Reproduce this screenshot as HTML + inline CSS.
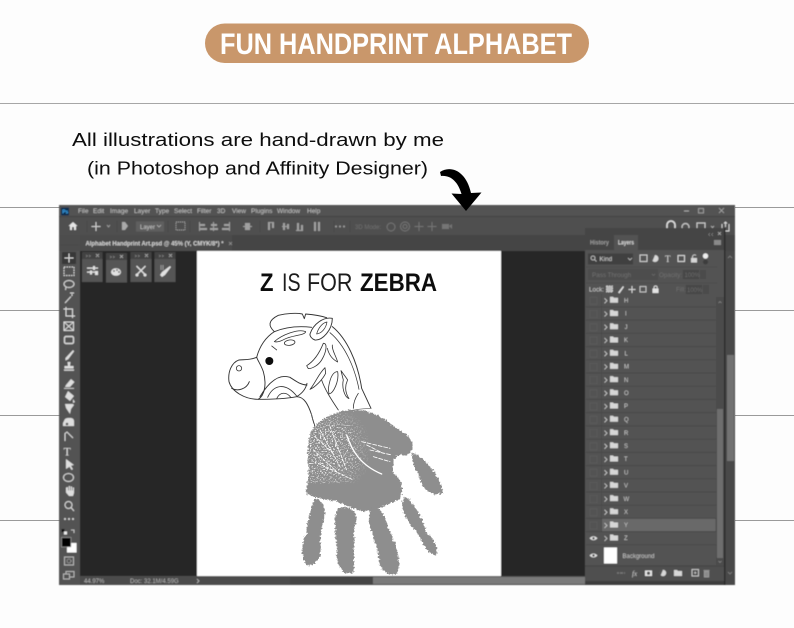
<!DOCTYPE html>
<html><head><meta charset="utf-8"><style>
html,body{margin:0;padding:0;background:#fdfdfd;width:794px;height:628px;overflow:hidden}
svg{display:block}
text{font-family:"Liberation Sans",sans-serif}
</style></head><body>
<svg width="794" height="628" viewBox="0 0 794 628" xmlns="http://www.w3.org/2000/svg">
<defs>
<filter id="b3" x="-5%" y="-5%" width="110%" height="110%"><feGaussianBlur stdDeviation=".35"/></filter>
<filter id="b5" x="-2%" y="-2%" width="104%" height="104%"><feGaussianBlur stdDeviation=".42"/></filter>
<filter id="rough" x="-10%" y="-10%" width="120%" height="120%" color-interpolation-filters="sRGB"><feTurbulence type="fractalNoise" baseFrequency=".16" numOctaves="3" seed="4"/><feDisplacementMap in="SourceGraphic" scale="14" xChannelSelector="R" yChannelSelector="G"/><feGaussianBlur stdDeviation=".8"/></filter>
<filter id="speck" x="0" y="0" width="100%" height="100%" color-interpolation-filters="sRGB"><feTurbulence type="fractalNoise" baseFrequency=".2 .28" numOctaves="2" seed="9"/><feColorMatrix values="0 0 0 0 1 0 0 0 0 1 0 0 0 0 1 9 0 0 0 -5"/><feComposite operator="in" in2="SourceGraphic"/><feGaussianBlur stdDeviation=".7"/></filter>
<radialGradient id="fade" gradientUnits="userSpaceOnUse" cx="95" cy="150" r="150"><stop offset="0" stop-color="#fff" stop-opacity="1"/><stop offset=".55" stop-color="#fff" stop-opacity=".8"/><stop offset="1" stop-color="#fff" stop-opacity="0"/></radialGradient>
<g id="fo"><path d="M0 1h3l1 1h4v5H0z" fill="#d6d6d6"/></g>
<g id="eye"><path d="M-4 0Q0-4 4 0Q0 4-4 0z" fill="#e2e2e2"/><circle r="1.2" fill="#444"/></g>
<g id="r"><rect x="590" y="-3" width="7" height="7" fill="none" stroke="#5e5e5e" stroke-width=".7"/><path d="M604.500-2L607 .5 604.500 3" fill="none" stroke="#cfcfcf" stroke-width=".8"/><use href="#fo" x="610" y="-4.500"/><path d="M586 6.600H716" stroke="#444" stroke-width=".7"/><path d="M601.500-6.600V6.600" stroke="#484848" stroke-width=".6"/></g>
</defs>

<rect width="794" height="628" fill="#fdfdfd"/>
<!-- plank lines -->
<g stroke="#9a9a9a" stroke-width="1" filter="url(#b3)">
<path d="M0 103.500H794" stroke="#a6a6a6"/>
<path d="M0 207.500H60M735 207.500H794"/>
<path d="M0 310.500H60M735 310.500H794"/>
<path d="M0 415.500H60M735 415.500H794"/>
<path d="M0 520.500H60M735 520.500H794"/>
</g>

<!-- pill -->
<rect x="205" y="23.500" width="384" height="39.500" rx="19.700" fill="#c9976b"/>
<text x="220" y="54" font-size="30" font-weight="700" fill="#fff" textLength="352" lengthAdjust="spacingAndGlyphs" filter="url(#b3)">FUN HANDPRINT ALPHABET</text>

<!-- caption -->
<g fill="#111" filter="url(#b3)">
<text x="72" y="146" font-size="18" textLength="372" lengthAdjust="spacingAndGlyphs">All illustrations are hand-drawn by me</text>
<text x="87" y="174.500" font-size="18" textLength="341" lengthAdjust="spacingAndGlyphs">(in Photoshop and Affinity Designer)</text>
</g>

<!-- PS window -->
<g filter="url(#b5)">
<rect x="59" y="205" width="676" height="380" fill="#535353"/>
<rect x="59" y="216" width="676" height="19" fill="#505050"/>
<path d="M59 216.500H735" stroke="#3e3e3e" stroke-width=".7"/>
<rect x="80" y="235" width="655" height="16" fill="#454545"/>
<rect x="59" y="235" width="21" height="16" fill="#4d4d4d"/>
<rect x="80" y="251" width="505" height="325" fill="#282828"/>
<rect x="59" y="251" width="21" height="334" fill="#535353"/>
<rect x="197" y="251" width="304" height="325" fill="#fff"/>
<rect x="80" y="576" width="505" height="9" fill="#4c4c4c"/>
<rect x="290" y="577" width="83" height="7" fill="#444"/>
<rect x="373" y="577" width="212" height="7" fill="#7a7a7a"/>

<!-- PS icon + menu -->
<rect x="61" y="207.500" width="8" height="8" fill="#0d2f4f"/>
<text x="62.200" y="213.700" font-size="5" font-weight="700" fill="#3fa9f5">Ps</text>
<g font-size="6.500" fill="#c4c4c4">
<text x="78" y="213">File</text><text x="93" y="213">Edit</text><text x="110" y="213">Image</text><text x="134" y="213">Layer</text><text x="155" y="213">Type</text><text x="174" y="213">Select</text><text x="197" y="213">Filter</text><text x="217" y="213">3D</text><text x="232" y="213">View</text><text x="251" y="213">Plugins</text><text x="277" y="213">Window</text><text x="307" y="213">Help</text>
</g>
<path d="M684 211h5" stroke="#aaa"/><rect x="698.500" y="208.500" width="5" height="4.500" fill="none" stroke="#aaa" stroke-width=".8"/><path d="M719 208l5 5M724 208l-5 5" stroke="#aaa" stroke-width=".8"/>

<!-- options bar -->
<path d="M68.500 226l4.500-4 4.500 4h-1.500v4h-2v-3h-2v3h-2v-4z" fill="#e6e6e6"/>
<g stroke="#d0d0d0" stroke-width="1" fill="none"><path d="M96 222v9M91.500 226.500h9"/></g>
<path d="M107 225l1.500 2 1.500-2" fill="none" stroke="#aaa" stroke-width=".7"/>
<path d="M87 221v11M117 221v11M168 221v11M190 221v11M260 221v11M334 221v11M350 221v11" stroke="#454545" stroke-width=".8"/>
<path d="M122 222h3l3 4-3 4h-3z" fill="#aaa"/>
<rect x="136" y="221.500" width="28" height="10" fill="#5e5e5e"/>
<text x="140" y="229" font-size="6" fill="#c8c8c8">Layer</text>
<path d="M157 225l2 2 2-2" fill="none" stroke="#bbb" stroke-width=".7"/>
<rect x="176" y="222" width="9" height="8" fill="none" stroke="#aaa" stroke-width=".9" stroke-dasharray="1 1"/>
<g fill="#a0a0a0">
<rect x="199" y="222" width="1" height="9"/><rect x="200" y="224" width="5" height="2"/><rect x="200" y="228" width="7" height="2"/>
<rect x="213" y="222" width="1" height="9"/><rect x="211" y="224" width="6" height="2"/><rect x="210" y="228" width="8" height="2"/>
<rect x="229" y="222" width="1" height="9"/><rect x="224" y="224" width="5" height="2"/><rect x="222" y="228" width="7" height="2"/>
<rect x="243" y="226" width="9" height="1"/><rect x="245" y="223" width="5" height="7"/>
<rect x="268" y="222" width="6" height="1"/><rect x="268" y="223" width="2" height="7"/><rect x="272" y="223" width="2" height="5"/>
<rect x="282" y="226" width="7" height="1"/><rect x="283" y="223" width="2" height="7"/><rect x="287" y="224" width="2" height="5"/>
<rect x="296" y="230" width="7" height="1"/><rect x="297" y="223" width="2" height="7"/><rect x="301" y="225" width="2" height="5"/>
<rect x="314" y="222" width="2" height="9"/><rect x="318" y="222" width="2" height="9"/>
<circle cx="336" cy="226.500" r="1"/><circle cx="340" cy="226.500" r="1"/><circle cx="344" cy="226.500" r="1"/>
</g>
<text x="355" y="229" font-size="6" fill="#6f6f6f">3D Mode:</text>
<g fill="none" stroke="#757575" stroke-width="1">
<circle cx="391" cy="227" r="4"/><circle cx="405" cy="226.500" r="4.500"/><circle cx="405" cy="226.500" r="2"/>
<path d="M419 222v9M414.500 226.500h9M432 222v9M427.500 226.500h9"/>
</g>
<rect x="442" y="224" width="7" height="5" fill="#757575"/><path d="M449 226l3-2v5z" fill="#757575"/>
<!-- top right icons -->
<path d="M667 228v-3a4 4 0 0 1 8 0v3" fill="none" stroke="#e0e0e0" stroke-width="1.600"/>
<circle cx="685.500" cy="227" r="3.500" fill="none" stroke="#c8c8c8" stroke-width="1.200"/>
<rect x="697" y="223" width="8" height="6" fill="none" stroke="#c8c8c8" stroke-width="1.200"/>
<path d="M711 226l1.500 1.500 1.500-1.500" fill="none" stroke="#bbb" stroke-width=".8"/>
<path d="M722 224v7h7v-7M725.500 222v5M724 223.500l1.500-1.500 1.500 1.500" fill="none" stroke="#ddd" stroke-width=".9"/>

<!-- tab -->
<rect x="80" y="235" width="152" height="16" fill="#4c4c4c"/>
<text x="85.500" y="245.500" font-size="6.200" font-weight="700" fill="#d8d8d8" textLength="138" lengthAdjust="spacingAndGlyphs">Alphabet Handprint Art.psd @ 45% (Y, CMYK/8*) *</text>
<path d="M229 242l3 3M232 242l-3 3" stroke="#999" stroke-width=".6"/>

<!-- float panels -->
<g fill="#555">
<rect x="82" y="252" width="20.500" height="30"/><rect x="106" y="253" width="21" height="29.500"/><rect x="130.500" y="252" width="21" height="30"/><rect x="154.500" y="252" width="21" height="30"/>
</g>
<g fill="#434343"><rect x="82" y="252" width="20.500" height="7"/><rect x="106" y="253" width="21" height="7"/><rect x="130.500" y="252" width="21" height="7"/><rect x="154.500" y="252" width="21" height="7"/></g>
<g stroke="#c0c0c0" stroke-width=".6" fill="none">
<path d="M96 254l3 3M99 254l-3 3M120 255l3 3M123 255l-3 3M145 254l3 3M148 254l-3 3M169 254l3 3M172 254l-3 3"/>
<path d="M86 255l1.500 1 -1.500 1M89 255l1.500 1-1.500 1M110 256l1.500 1-1.500 1M113 256l1.500 1-1.500 1M135 255l1.500 1-1.500 1M138 255l1.500 1-1.500 1M159 255l1.500 1-1.500 1M162 255l1.500 1-1.500 1" stroke="#8a8a8a"/>
</g>
<!-- panel glyph icons -->
<g fill="#e2e2e2">
<path d="M87 267.500h11v1.200H87zM87 271.500h11v1.200H87z"/><rect x="93" y="266" width="2" height="4"/><rect x="90" y="270.500" width="2" height="4"/>
<rect x="95" y="271" width="3" height="4"/>
<ellipse cx="116" cy="272" rx="5" ry="3.800"/>
</g>
<g fill="#555"><circle cx="114" cy="271" r=".9"/><circle cx="117" cy="270" r=".9"/><circle cx="119" cy="272" r=".9"/></g>
<g stroke="#e2e2e2" stroke-width="1.300" fill="none"><path d="M136.500 266l9 9M145.500 266l-9 9"/></g>
<circle cx="137" cy="275" r="1.500" fill="#e2e2e2"/><circle cx="145" cy="275" r="1.500" fill="#e2e2e2"/>
<path d="M160 275l2-3 8-6 1 1-6 8-3 2z" fill="#e2e2e2"/><path d="M161 265v5M163 265v5" stroke="#aaa" stroke-width=".8"/>

<!-- toolbar icons -->
<path d="M60 245h19" stroke="#444" stroke-width=".5"/>
<rect x="62" y="252" width="14" height="12" fill="#383838"/>
<g stroke="#dcdcdc" stroke-width="1" fill="none">
<path d="M69 253.500v9M64.500 258h9"/>
<rect x="64" y="267" width="10" height="8.500" stroke-dasharray="1.500 1"/>
<ellipse cx="69" cy="284" rx="5" ry="3.500"/><path d="M66 287l-.5 3"/>
<path d="M65 303l6-6.500M72 294v2M70 293h4"/>
<path d="M66 307v9h9M63.500 309h9v9"/>
<rect x="64" y="322" width="9.500" height="8.500"/><path d="M64 322l9.500 8.500M73.500 322L64 330.500"/>
<rect x="64.500" y="336.500" width="9" height="7" rx="1.500" stroke-width="1.400"/>
<circle cx="68.500" cy="505" r="3.500"/><path d="M71 507.500l3 3.500"/>
<ellipse cx="68.500" cy="477.500" rx="5" ry="4"/>
<path d="M65 441v-7.500l2-1.500 6 6"/>
</g>
<g fill="#dedede">
<path d="M65.500 358l7.500-8 1.200 1.200-6 8-2.700 1.300z"/>
<path d="M67.500 362h3l-.5 4h3.500v2.500h-9V366h3.500zM64 369.500h10v1.200H64z"/>
<path d="M66 385l5-6 3.500 3-4.500 5h-5z"/><path d="M64 388h10v.8H64z"/>
<path d="M68 391l6 5-4 5-5-4z M73 399l2 3-2 1z"/>
<path d="M65 404h8l1 1-3 4-1 5-2-3-2-3z"/>
<path d="M64 421a4 4 0 0 1 4-3h3a3 3 0 0 1 3 3v5H63v-3z"/>
<path d="M66 459l8 6-3 .8 2 3.400-1.500.8-2-3.300L66 469z"/>
<path d="M66 487.500v5l3 3.500h4l1-3v-5.500h-1.300v3h-.7v-4h-1.300v4h-.7v-4.500h-1.300v4.500h-.7v-3.500z"/>
<circle cx="65" cy="519" r="1"/><circle cx="69" cy="519" r="1"/><circle cx="73" cy="519" r="1"/>
</g>
<text x="63.500" y="455.500" font-size="12" fill="#e0e0e0" style="font-family:'Liberation Serif',serif">T</text>
<circle cx="67" cy="424" r="1.300" fill="#535353"/>
<!-- colors -->
<rect x="61.500" y="529" width="3" height="3" fill="#111"/><rect x="64" y="531.500" width="3" height="3" fill="#eee"/>
<path d="M71 530h3v3" fill="none" stroke="#ddd" stroke-width=".8"/>
<rect x="67" y="543" width="9.500" height="9.500" fill="#fff"/>
<rect x="61.500" y="537.500" width="9.500" height="9.500" fill="#000" stroke="#ccc" stroke-width=".5"/>
<rect x="64.500" y="557" width="9" height="8" fill="none" stroke="#b5b5b5"/><circle cx="69" cy="561" r="2" fill="none" stroke="#b5b5b5" stroke-width=".8" stroke-dasharray="1 .6"/>
<rect x="66" y="571.500" width="8" height="5.500" fill="none" stroke="#b5b5b5"/><rect x="63.500" y="574" width="6" height="5" fill="#535353" stroke="#b5b5b5"/>

<!-- status -->
<text x="84" y="583" font-size="6" fill="#b8b8b8">44.97%</text>
<text x="130" y="583" font-size="6" fill="#b0b0b0">Doc: 32.1M/4.59G</text>
<path d="M197 579l2 2-2 2" fill="none" stroke="#ccc" stroke-width=".7"/>

<!-- outer scrollbar -->
<rect x="725" y="251" width="10" height="334" fill="#4a4a4a"/>
<rect x="727" y="355" width="7" height="106" fill="#727272"/>
<path d="M728 258l2-2 2 2" fill="none" stroke="#888" stroke-width=".7"/>
<path d="M728 572l2 2 2-2" fill="none" stroke="#888" stroke-width=".7"/>

<!-- layers panel -->
<rect x="585" y="228" width="140" height="357" fill="#535353"/>
<rect x="585" y="228" width="140" height="22" fill="#454545"/>
<rect x="724" y="228" width="1.500" height="357" fill="#2b2b2b"/>
<rect x="614" y="235" width="24" height="15" fill="#535353"/>
<text x="590" y="244.500" font-size="6.200" font-weight="700" fill="#9d9d9d" textLength="19" lengthAdjust="spacingAndGlyphs">History</text>
<text x="618" y="244.500" font-size="6.200" font-weight="700" fill="#dcdcdc" textLength="16" lengthAdjust="spacingAndGlyphs">Layers</text>
<rect x="714" y="240" width="7" height="5" fill="#8a8a8a"/>
<path d="M718 232l3 3M721 232l-3 3" stroke="#bbb" stroke-width=".6"/>
<path d="M710 233l-1.500 1.500 1.500 1.500M713 233l-1.500 1.500 1.500 1.500" fill="none" stroke="#999" stroke-width=".5"/>
<rect x="588" y="253.500" width="45" height="11" fill="#3f3f3f"/>
<circle cx="593" cy="258" r="2" fill="none" stroke="#ccc" stroke-width=".8"/><path d="M594.500 259.500l2 2" stroke="#ccc" stroke-width=".8"/>
<text x="599.500" y="261" font-size="6.300" fill="#d8d8d8">Kind</text>
<path d="M628 258l2 2 2-2" fill="none" stroke="#ccc" stroke-width=".7"/>
<rect x="640" y="255" width="7" height="6.500" fill="#555" stroke="#cdcdcd"/>
<circle cx="655" cy="258.500" r="3.500" fill="#d8d8d8"/><path d="M655 255a3.500 3.500 0 0 0-2.500 6z" fill="#555"/>
<text x="665" y="262" font-size="9" fill="#d8d8d8" style="font-family:'Liberation Serif',serif">T</text>
<rect x="678" y="255.500" width="6.500" height="6" fill="none" stroke="#d6d6d6"/>
<rect x="691" y="258" width="6" height="4.500" fill="#d6d6d6"/><path d="M692.500 258v-1.500a2 2 0 0 1 3.500-1" fill="none" stroke="#d6d6d6" stroke-width=".9"/>
<circle cx="705.500" cy="256" r="2.700" fill="#eee"/><rect x="703" y="259.500" width="5" height="5" rx="2.500" fill="#3e3e3e"/>
<path d="M586 267h131M586 283h131" stroke="#484848" stroke-width=".6"/>
<rect x="588" y="269" width="70" height="11" fill="#4e4e4e"/>
<text x="592" y="277" font-size="6.300" fill="#6f6f6f">Pass Through</text>
<path d="M652 274l1.500 1.500 1.500-1.500" fill="none" stroke="#707070" stroke-width=".6"/>
<text x="659" y="277" font-size="6.300" fill="#6f6f6f">Opacity:</text>
<rect x="683" y="270" width="16" height="9" fill="#474747"/>
<text x="684.500" y="277" font-size="6" fill="#6a6a6a">100%</text>
<rect x="700" y="270" width="6" height="9" fill="#4b4b4b"/>
<text x="589" y="291.500" font-size="6.300" fill="#cfcfcf">Lock:</text>
<rect x="606.500" y="286" width="6" height="6" fill="#b8b8b8" stroke="#e2e2e2" stroke-width=".8" stroke-dasharray="1.500 1"/>
<path d="M618 292.500l5-6.500 1 1-4.500 6.500z" fill="#e2e2e2"/>
<path d="M632 286v7M628.500 289.500h7" stroke="#d5d5d5" stroke-width="1"/>
<rect x="640" y="286.500" width="6" height="5.500" fill="none" stroke="#cfcfcf" stroke-width=".9"/>
<rect x="652.500" y="288.500" width="6" height="4.500" fill="#e4e4e4"/><path d="M654 288.500v-1a1.600 1.600 0 0 1 3.200 0v1" fill="none" stroke="#e4e4e4" stroke-width=".9"/>
<text x="676" y="291.500" font-size="6.300" fill="#6f6f6f">Fill:</text>
<rect x="686" y="285" width="16" height="9" fill="#474747"/>
<text x="687" y="292" font-size="6" fill="#6a6a6a">100%</text>
<rect x="703" y="285" width="6" height="9" fill="#4b4b4b"/>

<!-- rows -->
<rect x="602" y="518" width="113.500" height="13.300" fill="#696969"/>
<g fill="#c8c8c8" font-size="6">
<use href="#r" y="300.300"/><text x="624" y="302.500">H</text>
<use href="#r" y="313.500"/><text x="625" y="315.700">I</text>
<use href="#r" y="326.700"/><text x="624.500" y="328.900">J</text>
<use href="#r" y="340"/><text x="624" y="342.200">K</text>
<use href="#r" y="353.200"/><text x="624.500" y="355.400">L</text>
<use href="#r" y="366.400"/><text x="624" y="368.600">M</text>
<use href="#r" y="379.600"/><text x="624" y="381.800">N</text>
<use href="#r" y="392.800"/><text x="624" y="395">O</text>
<use href="#r" y="406"/><text x="624" y="408.200">P</text>
<use href="#r" y="419.300"/><text x="624" y="421.500">Q</text>
<use href="#r" y="432.600"/><text x="624" y="434.800">R</text>
<use href="#r" y="445.800"/><text x="624" y="448">S</text>
<use href="#r" y="459"/><text x="624" y="461.200">T</text>
<use href="#r" y="472.200"/><text x="624" y="474.400">U</text>
<use href="#r" y="485.400"/><text x="624" y="487.600">V</text>
<use href="#r" y="498.600"/><text x="623.500" y="500.800">W</text>
<use href="#r" y="511.800"/><text x="624" y="514">X</text>
<use href="#r" y="525"/><text x="624" y="527.200">Y</text>
<path d="M604.500 536l2.500 2.500-2.500 2.500" fill="none" stroke="#cfcfcf" stroke-width=".8"/><use href="#fo" x="610" y="533.500"/><text x="624" y="540.200">Z</text>
</g>
<use href="#eye" x="593.500" y="538.300"/>
<path d="M586 544.800H716" stroke="#444" stroke-width=".7"/>
<use href="#eye" x="593.500" y="555.500"/>
<rect x="604" y="547.500" width="13" height="16" fill="#fff"/>
<text x="622.500" y="558" font-size="6" fill="#c8c8c8">Background</text>
<!-- panel scrollbar -->
<rect x="716" y="297" width="8" height="268" fill="#4b4b4b"/>
<rect x="717" y="409" width="6" height="149" fill="#6e6e6e"/>
<path d="M718.500 303l1.500-1.500 1.500 1.500" fill="none" stroke="#8a8a8a" stroke-width=".7"/>
<path d="M718.500 561l1.500 1.500 1.500-1.500" fill="none" stroke="#8a8a8a" stroke-width=".7"/>
<!-- panel bottom -->
<rect x="585" y="566" width="139" height="15" fill="#4f4f4f"/>
<path d="M585 566h139" stroke="#3e3e3e" stroke-width=".7"/>
<rect x="585" y="581" width="139" height="4" fill="#3c3c3c"/>
<path d="M617 573h4M621 573h4" stroke="#7a7a7a" stroke-width="1.500" stroke-dasharray="2 1"/>
<text x="632" y="576" font-size="7" font-style="italic" fill="#cfcfcf" style="font-family:'Liberation Serif',serif">fx</text>
<rect x="645" y="570.500" width="7" height="5.500" fill="#e6e6e6"/><circle cx="648.500" cy="573.200" r="1.600" fill="#4f4f4f"/>
<circle cx="663" cy="573" r="3.200" fill="#d8d8d8"/><path d="M663 569.800a3.200 3.200 0 0 0-2.300 5.500z" fill="#4f4f4f"/>
<use href="#fo" x="674" y="569"/>
<rect x="692" y="569.500" width="6.500" height="6.500" fill="none" stroke="#d0d0d0" stroke-width=".9"/><path d="M695.200 571.500v2.500M694 572.800h2.500" stroke="#d0d0d0" stroke-width=".7"/>
<path d="M703.500 570.500h6M704.300 571.500h4.500v5.500h-4.500z" fill="#8a8a8a" stroke="#a6a6a6" stroke-width=".7"/>
</g>

<!-- Title on doc -->
<g fill="#111" filter="url(#b3)">
<text x="260" y="291" font-size="25" font-weight="700" textLength="13.500" lengthAdjust="spacingAndGlyphs">Z</text>
<text x="282" y="291" font-size="25" textLength="18.500" lengthAdjust="spacingAndGlyphs" fill="#1c1c1c">IS</text>
<text x="307" y="291" font-size="25" textLength="45.500" lengthAdjust="spacingAndGlyphs" fill="#1c1c1c">FOR</text>
<text x="360" y="291" font-size="25" font-weight="700" textLength="77" lengthAdjust="spacingAndGlyphs">ZEBRA</text>
</g>

<!-- Zebra -->
<g transform="translate(215 300) scale(.3333)" fill="none" stroke="#333" stroke-width="2.800" stroke-linecap="round" stroke-linejoin="round" filter="url(#b3)">
<path d="M125 172C100 182 85 178 72 180C50 188 38 215 42 245C50 275 90 298 130 298C150 285 155 250 145 215C138 195 130 185 125 172z"/>
<path d="M125 172C135 135 155 110 178 95C215 80 255 78 290 82"/>
<path d="M178 95C160 78 158 62 190 46C215 40 245 38 262 42L268 56L272 42C295 44 320 48 335 53"/>
<path d="M285 102C295 72 325 50 352 55C352 90 322 122 300 120C290 117 284 108 285 102z"/>
<path d="M305 102C310 82 325 67 336 66C333 85 320 100 305 102z" stroke-width="2.200"/>
<path d="M352 80C395 115 428 185 440 265L468 325"/>
<path d="M345 98C390 135 420 205 432 268" stroke-width="2.200"/>
<path d="M130 298C160 298 205 298 245 290C262 280 272 268 276 250"/>
<path d="M245 290C268 290 280 315 290 345C293 360 298 372 300 380"/>
<path d="M310 374C350 342 410 326 468 325" stroke="#777" stroke-width="2.200"/>
<path d="M135 290C165 240 195 222 225 232C245 245 258 255 276 255"/>
<path d="M158 292C175 255 210 245 245 288" stroke-width="2.400"/>
<path d="M185 296C195 275 215 275 228 293" stroke-width="2.400"/>
<path d="M178 125C200 105 250 85 272 95C272 106 228 106 208 118C195 125 185 127 178 125z" stroke-width="2.400"/>
<ellipse cx="224" cy="128" rx="16" ry="8" transform="rotate(-8 224 128)" stroke-width="2.400"/>
<path d="M170 138L185 150" stroke-width="2.400"/>
<circle cx="72" cy="205" r="8" stroke-width="2.400"/>
<path d="M50 265C70 276 95 266 103 245"/>
<path d="M275 197C300 182 315 155 325 130C338 128 335 155 320 180C310 196 292 206 280 206z" stroke-width="2.400"/>
<path d="M337 145C342 165 352 178 368 186C362 165 350 150 352 135" stroke-width="2.400"/>
<path d="M330 203C310 222 302 248 285 268C300 262 322 240 332 220z" stroke-width="2.400"/>
<path d="M340 266C345 232 355 215 368 215C373 242 356 280 342 282z" stroke-width="2.400"/>
<path d="M378 212C385 222 392 230 398 240C388 260 392 280 402 296C388 290 380 262 385 240z" stroke-width="2.400"/>
<path d="M320 240C330 270 350 300 370 330" stroke-width="2.400"/>
<path d="M430 280C420 295 415 310 415 325" stroke-width="2.400"/>
<circle cx="163" cy="183" r="12" fill="#0a0a0a" stroke="none"/>
</g>

<!-- Hand -->
<g transform="translate(290 400) scale(.3333)">
<g fill="#8e8e8e" stroke="#8e8e8e" stroke-width="8" stroke-linejoin="round" filter="url(#rough)">
<path d="M70 90C100 50 160 30 210 35C270 40 300 80 345 105C365 125 370 150 350 160C330 160 320 160 305 180L305 220C330 235 340 270 325 295C290 310 260 325 230 330C200 330 170 310 140 300C110 295 75 290 52 278L60 220C55 170 55 120 70 90z"/>
<path d="M370 165C400 175 440 220 455 275C430 285 405 270 395 240C385 210 370 195 370 165z"/>
<path d="M345 295C370 310 400 370 405 400C425 415 445 445 435 462C415 460 395 415 385 395C355 365 330 320 345 295z"/>
<path d="M245 330C265 320 285 350 290 385C310 420 330 480 320 515C290 530 270 500 270 470C265 430 245 400 240 360z"/>
<path d="M145 330C170 320 200 335 195 360C190 375 185 385 190 420C180 450 195 490 185 515C160 525 140 490 145 450C140 400 135 360 145 330z"/>
<path d="M75 300C90 295 105 330 100 355C90 385 85 410 88 440C90 475 70 500 50 490C35 460 40 420 55 400C50 370 70 330 75 300z"/>
</g>
<rect x="30" y="40" width="240" height="210" fill="url(#fade)" filter="url(#speck)"/>
<g fill="none" stroke="#fff" stroke-linecap="round" filter="url(#b3)">
<path d="M170 105C185 150 210 195 275 222" stroke-width="4"/>
<path d="M75 110L130 160M90 90L150 200M70 150L140 215M120 80L170 210M85 190L190 240" stroke-width="2.500" stroke-dasharray="8 5"/>
<path d="M215 125L300 145M240 150L305 165M250 170L300 185M230 135L280 160" stroke-width="2.500" stroke-dasharray="12 5"/>
</g>
</g>

<!-- arrow -->
<path d="M440 172C450 165 466 170 471 193L481.500 192.500L466 211L451.500 193.500L461.500 194C458 182 451 175 441 176z" fill="#000"/>
</svg>
</body></html>
